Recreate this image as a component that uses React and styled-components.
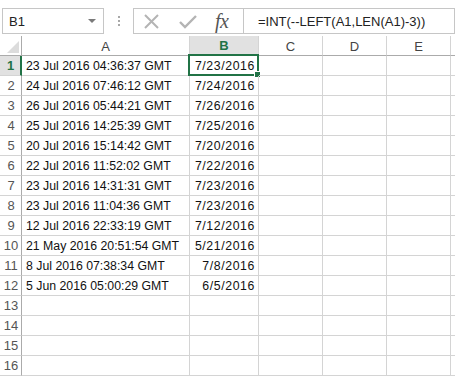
import React from 'react'
import styled, { createGlobalStyle } from 'styled-components'

const GlobalStyle = createGlobalStyle`
  html, body {
    margin: 0;
    padding: 0;
    background: #ffffff;
    overflow: hidden;
  }
  body {
    font-family: "Liberation Sans", Arial, sans-serif;
  }
`

const green = '#217346'

const rows = [
  ['23 Jul 2016 04:36:37 GMT', '7/23/2016'],
  ['24 Jul 2016 07:46:12 GMT', '7/24/2016'],
  ['26 Jul 2016 05:44:21 GMT', '7/26/2016'],
  ['25 Jul 2016 14:25:39 GMT', '7/25/2016'],
  ['20 Jul 2016 15:14:42 GMT', '7/20/2016'],
  ['22 Jul 2016 11:52:02 GMT', '7/22/2016'],
  ['23 Jul 2016 14:31:31 GMT', '7/23/2016'],
  ['23 Jul 2016 11:04:36 GMT', '7/23/2016'],
  ['12 Jul 2016 22:33:19 GMT', '7/12/2016'],
  ['21 May 2016 20:51:54 GMT', '5/21/2016'],
  ['8 Jul 2016 07:38:34 GMT', '7/8/2016'],
  ['5 Jun 2016 05:00:29 GMT', '6/5/2016'],
  ['', ''],
  ['', ''],
  ['', ''],
  ['', '']
]

// F is only a sliver at the right edge, its letter lies off screen
const columns = ['A', 'B', 'C', 'D', 'E', '']

const Page = styled.div`
  width: 455px;
  height: 376px;
  overflow: hidden;
  display: flex;
  flex-direction: column;
`

const FormulaBar = styled.div`
  height: 43px;
  box-sizing: border-box;
  padding: 8px 0 0 2px;
  display: flex;
  align-items: flex-start;
`

const NameBox = styled.div`
  width: 102px;
  height: 26px;
  box-sizing: border-box;
  border: 1px solid #c6c6c6;
  display: flex;
  align-items: center;
  justify-content: space-between;
  padding: 0 7px 0 6px;
  font-size: 13px;
  color: #222;
`

const DropArrow = styled.span`
  width: 0;
  height: 0;
  border-left: 4px solid transparent;
  border-right: 4px solid transparent;
  border-top: 4px solid #7a7a7a;
`

const Grip = styled.div`
  width: 29px;
  height: 26px;
  display: flex;
  flex-direction: column;
  align-items: center;
  justify-content: center;
  gap: 2px;
`

const Dot = styled.span`
  width: 2px;
  height: 2px;
  background: #a8a8a8;
`

const ButtonBox = styled.div`
  width: 111px;
  height: 26px;
  box-sizing: border-box;
  border: 1px solid #c6c6c6;
  display: flex;
  align-items: center;
  padding-left: 9px;
  gap: 19px;
`

const FxLabel = styled.span`
  font-family: "Liberation Serif", "Times New Roman", serif;
  font-style: italic;
  font-size: 20px;
  color: #555;
  margin-left: -1px;
  letter-spacing: -0.5px;
`

const FormulaInput = styled.div`
  flex: 1;
  height: 26px;
  box-sizing: border-box;
  border: 1px solid #c6c6c6;
  border-left: none;
  display: flex;
  align-items: center;
  padding-left: 14px;
  font-size: 13px;
  color: #222;
  white-space: nowrap;
`

const Sheet = styled.div`
  display: grid;
  grid-template-columns: 22px 168px 69px 64px 64px 64px 64px;
  grid-auto-rows: 20px;
  font-size: 12.3px;
`

const Corner = styled.div`
  position: relative;
  box-sizing: border-box;
  border-right: 1px solid #ababab;
  border-bottom: 1px solid #ababab;
  &::after {
    content: '';
    position: absolute;
    right: 2px;
    bottom: 2px;
    width: 0;
    height: 0;
    border-left: 12px solid transparent;
    border-bottom: 12px solid #dcdcdc;
  }
`

const ColHeader = styled.div`
  box-sizing: border-box;
  display: flex;
  align-items: center;
  justify-content: center;
  padding-top: 1px;
  background: ${(p) => (p.$active ? '#e1e1e1' : '#ffffff')};
  color: ${(p) => (p.$active ? green : '#444')};
  font-weight: ${(p) => (p.$active ? 700 : 400)};
  font-size: 13px;
  border-right: 1px solid #d4d4d4;
  border-bottom: ${(p) => (p.$active ? `2px solid ${green}` : '1px solid #ababab')};
`

const RowHeader = styled.div`
  box-sizing: border-box;
  display: flex;
  align-items: center;
  justify-content: center;
  padding-left: 1px;
  background: ${(p) => (p.$active ? '#e1e1e1' : '#ffffff')};
  color: ${(p) => (p.$active ? green : '#555')};
  font-weight: ${(p) => (p.$active ? 700 : 400)};
  font-size: 13px;
  border-right: ${(p) => (p.$active ? `2px solid ${green}` : '1px solid #ababab')};
  border-bottom: 1px solid #d4d4d4;
`

const Cell = styled.div`
  position: relative;
  box-sizing: border-box;
  border-right: 1px solid #d4d4d4;
  border-bottom: 1px solid #d4d4d4;
  display: flex;
  align-items: center;
  justify-content: ${(p) => (p.$right ? 'flex-end' : 'flex-start')};
  padding: 1px 3px 0 4px;
  color: #111;
  white-space: nowrap;
  letter-spacing: ${(p) => (p.$right ? '0.6px' : '0')};
`

const Selection = styled.div`
  position: absolute;
  left: -2px;
  top: -2px;
  right: -1px;
  bottom: -1px;
  border: 2px solid ${green};
  pointer-events: none;
  &::after {
    content: '';
    position: absolute;
    right: -4px;
    bottom: -4px;
    width: 5px;
    height: 5px;
    background: ${green};
    border: 1px solid #fff;
  }
`

const CancelIcon = () => (
  <svg width="17" height="17" viewBox="0 0 17 17">
    <path d="M2 2 L15 15 M15 2 L2 15" stroke="#b4b4b4" strokeWidth="2" fill="none" />
  </svg>
)

const EnterIcon = () => (
  <svg width="18" height="17" viewBox="0 0 18 17">
    <path d="M1 9 L6 14 L17 3" stroke="#b4b4b4" strokeWidth="2.4" fill="none" />
  </svg>
)

const App = () => {
  return (
    <Page>
      <GlobalStyle />
      <FormulaBar>
        <NameBox>
          B1
          <DropArrow />
        </NameBox>
        <Grip>
          <Dot />
          <Dot />
          <Dot />
        </Grip>
        <ButtonBox>
          <CancelIcon />
          <EnterIcon />
          <FxLabel>fx</FxLabel>
        </ButtonBox>
        <FormulaInput>=INT(--LEFT(A1,LEN(A1)-3))</FormulaInput>
      </FormulaBar>
      <Sheet>
        <Corner />
        {columns.map((c, i) => (
          <ColHeader key={i} $active={c === 'B'}>{c}</ColHeader>
        ))}
        {rows.map((r, i) => (
          <React.Fragment key={i}>
            <RowHeader $active={i === 0}>{i + 1}</RowHeader>
            <Cell>{r[0]}</Cell>
            <Cell $right>
              {r[1]}
              {i === 0 && <Selection />}
            </Cell>
            <Cell />
            <Cell />
            <Cell />
            <Cell />
          </React.Fragment>
        ))}
      </Sheet>
    </Page>
  )
}

export default App
